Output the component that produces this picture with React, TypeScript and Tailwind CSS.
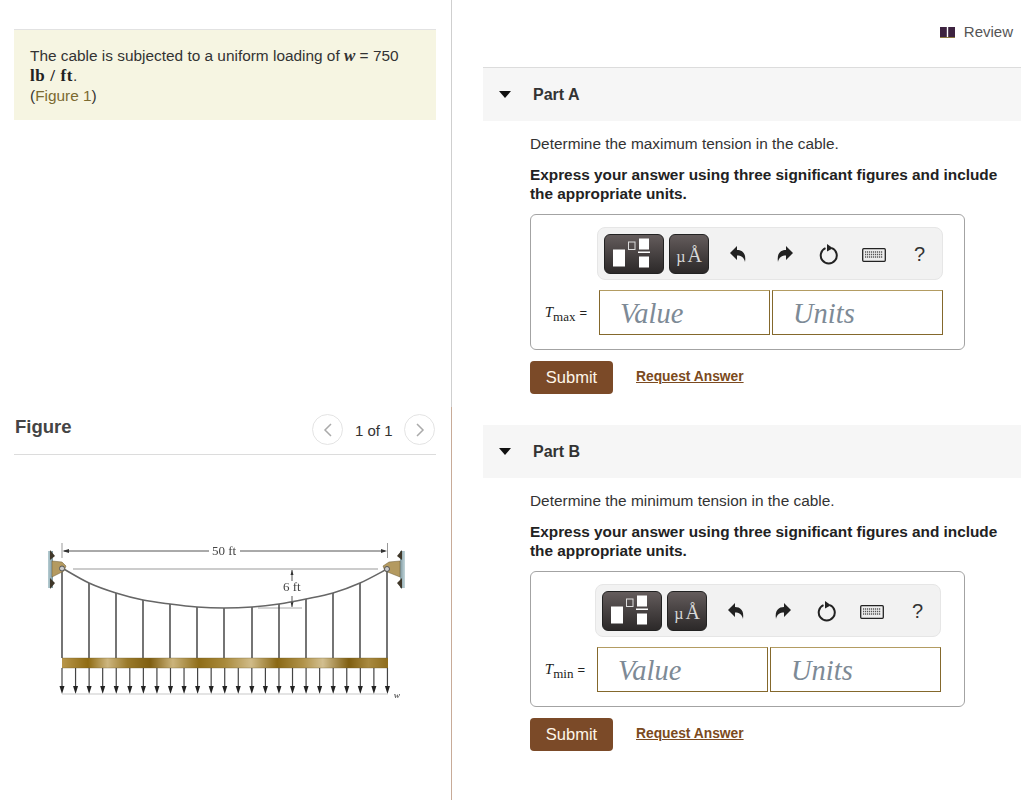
import React from "react";

const hangers: [number, number][] = [
  [62, 568], [89, 583], [116, 593], [143, 600], [170, 604], [197, 607], [224, 608],
  [252, 607], [279, 604], [306, 599], [333, 593], [360, 583], [387, 569],
];
const arrows = Array.from({ length: 25 }, (_, i) => 62 + i * 13.56);
const serif = "'Liberation Serif', serif";

function cablePath() {
  let d = `M${hangers[0][0]} ${hangers[0][1]}`;
  for (let i = 0; i < hangers.length - 1; i++) {
    const p0 = hangers[Math.max(i - 1, 0)];
    const p1 = hangers[i];
    const p2 = hangers[i + 1];
    const p3 = hangers[Math.min(i + 2, hangers.length - 1)];
    d += `C${p1[0] + (p2[0] - p0[0]) / 6} ${p1[1] + (p2[1] - p0[1]) / 6} ${p2[0] - (p3[0] - p1[0]) / 6} ${p2[1] - (p3[1] - p1[1]) / 6} ${p2[0]} ${p2[1]}`;
  }
  return d;
}

function Figure() {
  return (
    <svg width="390" height="180" viewBox="30 530 390 180" className="block blur-[0.35px]">
      <defs>
        <linearGradient id="deck" x1="62" x2="388" y1="0" y2="0" gradientUnits="userSpaceOnUse">
          {[
            ["0", "#b9974c"], ["0.08", "#8f6b12"], ["0.14", "#cdb67f"], ["0.2", "#9a7a2a"], ["0.27", "#7f5e10"],
            ["0.34", "#cbb47c"], ["0.42", "#8f6d18"], ["0.5", "#a98a3c"], ["0.58", "#d0bb88"], ["0.66", "#8a6814"],
            ["0.74", "#b1934a"], ["0.8", "#d2bf90"], ["0.88", "#7f5e10"], ["0.94", "#a98a40"], ["1", "#8e6c1c"],
          ].map(([o, c]) => (
            <stop key={o} offset={o} stopColor={c} />
          ))}
        </linearGradient>
        <linearGradient id="wallL" x1="0" x2="1" y1="0" y2="0">
          <stop offset="0" stopColor="#b5ccd2" />
          <stop offset="1" stopColor="#7d98a0" />
        </linearGradient>
        <linearGradient id="wallR" x1="0" x2="1" y1="0" y2="0">
          <stop offset="0" stopColor="#7d98a0" />
          <stop offset="1" stopColor="#c3d6da" />
        </linearGradient>
      </defs>
      <path d="M62 543V558M387.500 543V558" stroke="#999" strokeWidth="1" />
      <path d="M64 551H209M240 551H385" stroke="#555" strokeWidth="1" />
      <path d="M62.500 551L69 549V553ZM387 551L381 549V553Z" fill="#333" />
      <text x="212" y="555" fontSize="13" fontFamily={serif} fill="#444">50 ft</text>
      <path d="M73 569H378" stroke="#999" strokeWidth="1" />
      <path d="M292 570V581M292 596V607" stroke="#555" strokeWidth="1" />
      <path d="M292 570L290.500 575H293.500ZM292 607L290.500 602H293.500Z" fill="#333" />
      <text x="283" y="591" fontSize="13" fontFamily={serif} fill="#444">6 ft</text>
      <path d="M258 608H302" stroke="#aaa" strokeWidth="1" />
      {hangers.map(([x, y]) => (
        <path key={x} d={`M${x} ${y}V658`} stroke="#3a3a3a" strokeWidth="1.400" />
      ))}
      <path d={cablePath()} fill="none" stroke="#666" strokeWidth="1.500" />
      <rect x="62" y="658" width="326" height="10" fill="url(#deck)" />
      <path d="M62 658H388M62 668H388" stroke="#6e5a2a" strokeWidth="0.600" opacity="0.6" />
      {arrows.map((x) => (
        <g key={x}>
          <path d={`M${x} 668V688`} stroke="#444" strokeWidth="1.200" />
          <path d={`M${x - 2.500} 686H${x + 2.500}L${x} 694Z`} fill="#222" />
        </g>
      ))}
      <path d="M62 694H388" stroke="#bbb" strokeWidth="0.800" />
      <text x="394" y="698" fontSize="9" fontStyle="italic" fontWeight="700" fontFamily={serif} fill="#666">w</text>
      <rect x="48" y="551" width="5" height="37" fill="url(#wallL)" />
      <path d="M50 550L55 556L50 560ZM50 589L55 583L50 578Z" fill="#40382a" />
      <path d="M52 561L62 562L66 566L64 571L52 577Z" fill="#b49a60" stroke="#6a5a34" strokeWidth="0.500" />
      <circle cx="62" cy="568.500" r="2.500" fill="#ccc" stroke="#555" strokeWidth="1" />
      <rect x="400" y="551" width="5" height="37" fill="url(#wallR)" />
      <path d="M402 550L397 556L402 560ZM402 589L397 583L402 578Z" fill="#40382a" />
      <path d="M400 561L389 562L383 566L385 571L400 577Z" fill="#b49a60" stroke="#6a5a34" strokeWidth="0.500" />
      <circle cx="387" cy="569" r="2.500" fill="#ccc" stroke="#555" strokeWidth="1" />
    </svg>
  );
}

function Toolbar() {
  return (
    <div className="h-[53px] w-[346px] rounded-lg bg-[#f2f2f2] border border-[#e6e6e6] flex items-center pl-[6px]">
      <div className="w-[60px] h-[40px] rounded-md bg-gradient-to-b from-[#645c5c] to-[#2c2929] border border-[#222] flex items-center justify-center">
        <svg width="46" height="34" viewBox="0 0 46 34">
          <rect x="2" y="12.500" width="12" height="17" fill="#fff" />
          <rect x="17.500" y="5" width="6.500" height="7.500" fill="none" stroke="#ddd" strokeWidth="1" />
          <rect x="28" y="1.500" width="10" height="11" fill="#fff" />
          <rect x="27" y="14.500" width="12" height="1.500" fill="#fff" />
          <rect x="28" y="19.500" width="10" height="11" fill="#fff" />
        </svg>
      </div>
      <div className="ml-[5px] w-[40px] h-[40px] rounded-md bg-gradient-to-b from-[#645c5c] to-[#2c2929] border border-[#222] flex items-end justify-center pb-[8px] text-[#d8d8d8] font-['Liberation_Serif',serif] leading-none">
        <span className="text-[16px] mr-[2px]">µ</span>
        <span className="text-[20px]">Å</span>
      </div>
      <svg width="18" height="18" viewBox="0 0 18 18" className="ml-[21px]">
        <path d="M0 8L7 1V5C12 5 16.500 8 15 17C14 12 11 10.500 7 10.500V15Z" fill="#222" />
      </svg>
      <svg width="18" height="18" viewBox="0 0 18 18" className="ml-[27px]">
        <path d="M18 8L11 1V5C6 5 1.500 8 3 17C4 12 7 10.500 11 10.500V15Z" fill="#222" />
      </svg>
      <svg width="20" height="22" viewBox="0 0 20 22" className="ml-[26px]">
        <path d="M13 5.200A8 8 0 1 1 6.500 5.200" fill="none" stroke="#222" strokeWidth="2" />
        <path d="M8 1L14 5.300L8 8.500Z" fill="#222" />
      </svg>
      <svg width="24" height="14" viewBox="0 0 24 14" className="ml-[23px] mt-[3px]">
        <rect x="0.700" y="0.700" width="22.600" height="12.600" rx="1" fill="#eee" stroke="#222" strokeWidth="1.300" />
        <path d="M3 4H21M3 6.500H21M3 9H21" stroke="#555" strokeWidth="1.300" strokeDasharray="1.200 0.800" />
      </svg>
      <span className="ml-[28px] text-[20px] leading-none text-[#333]">?</span>
    </div>
  );
}

function Field({ label }: { label: string }) {
  return (
    <div className="w-[171px] h-[45px] border border-[#84682c] border-t-[#b39c62] flex items-center pl-[20px] pt-[3px] font-['Liberation_Serif',serif] italic text-[28.500px] text-[#7d8a96]">
      {label}
    </div>
  );
}

function Part({
  name,
  question,
  sub,
  toolbarInset,
  rowInset,
}: {
  name: string;
  question: string;
  sub: string;
  toolbarInset: string;
  rowInset: string;
}) {
  return (
    <section>
      <div className="h-[53px] bg-[#f6f6f6] flex items-center pl-[16px]">
        <svg width="12" height="7" viewBox="0 0 12 7">
          <path d="M0 0H12L6 7Z" fill="#111" />
        </svg>
        <span className="ml-[22px] text-[16px] font-bold text-[#333]">{name}</span>
      </div>
      <div className="pl-[47px]">
        <p className="mt-[13px] text-[15.400px] leading-[19px] text-[#333]">{question}</p>
        <p className="mt-[12px] text-[15.350px] leading-[19px] font-bold text-[#222]">
          Express your answer using three significant figures and include
          <br />
          the appropriate units.
        </p>
        <div className="mt-[11px] w-[435px] h-[136px] border border-[#a3a3a3] rounded-md">
          <div className={`pt-[12px] ${toolbarInset}`}>
            <Toolbar />
          </div>
          <div className={`mt-[10px] flex items-center ${rowInset}`}>
            <div className="w-[55px] -ml-[55px] pr-[12px] flex items-baseline justify-end text-[#222] font-['Liberation_Serif',serif]">
              <i className="text-[15px]">T</i>
              <span className="text-[13px] relative top-[4px]">{sub}</span>
              <span className="text-[13px] ml-[4px] font-['Liberation_Sans',sans-serif]">=</span>
            </div>
            <Field label="Value" />
            <div className="w-[2px]" />
            <Field label="Units" />
          </div>
        </div>
        <div className="mt-[11px] flex items-center">
          <div className="w-[83px] h-[33px] rounded-sm bg-[#7b4a28] text-[#fff6e8] text-[16.500px] flex items-center justify-center">
            Submit
          </div>
          <span className="ml-[23px] text-[13.800px] font-bold text-[#7b4a20] underline">Request Answer</span>
        </div>
      </div>
    </section>
  );
}

function Nav({ dir }: { dir: "l" | "r" }) {
  return (
    <div className="w-[31px] h-[31px] rounded-full border border-[#e4e4e4] flex items-center justify-center">
      <svg width="10" height="14" viewBox="0 0 10 14">
        <path d={dir === "l" ? "M8 1L2 7L8 13" : "M2 1L8 7L2 13"} fill="none" stroke="#aaa" strokeWidth="1.500" />
      </svg>
    </div>
  );
}

export default function App() {
  return (
    <div className="w-[1024px] h-[800px] flex bg-white overflow-hidden font-['Liberation_Sans',sans-serif]">
      <div className="w-[452px] shrink-0 flex flex-col">
        <div className="h-[407px] border-r border-[#cfcfcf] pt-[29px] pl-[14px] pr-[15px]">
          <div className="h-[91px] border-t border-[#e2e2e2] bg-[#f6f5e2] pl-[16px] pt-[16px] text-[15.400px] leading-[20px] text-[#333]">
            <div>
              The cable is subjected to a uniform loading of{" "}
              <i className="font-['Liberation_Serif',serif] font-bold text-[17px]">w</i> = 750
            </div>
            <div>
              <span className="font-['Liberation_Serif',serif] font-bold text-[17px] text-[#222] tracking-[0.6px]">lb / ft</span>.
            </div>
            <div>
              (<span className="text-[#7b6a30]">Figure 1</span>)
            </div>
          </div>
        </div>
        <div className="flex-1 border-r border-[#c8ab98] pl-[14px] pr-[15px]">
          <div className="h-[48px] border-b border-[#dcdcdc] flex items-center">
            <span className="pl-[1px] text-[18.500px] font-bold text-[#444] -mt-[7px]">Figure</span>
            <div className="ml-auto pr-[1px] flex items-center -mt-[2px]">
              <Nav dir="l" />
              <span className="mx-[11.500px] mt-[4px] text-[15px] text-[#333]">1 of 1</span>
              <Nav dir="r" />
            </div>
          </div>
          <div className="pl-[16px] pt-[75px]">
            <Figure />
          </div>
        </div>
      </div>
      <div className="flex-1 pl-[31px] pr-[3px]">
        <div className="h-[68px] pt-[23px] border-b border-[#dcdcdc] flex items-start justify-end pr-[8px]">
          <svg width="15" height="12" viewBox="0 0 15 12" className="mt-[3px] mr-[9px]">
            <path d="M0 1H6.800V11H0ZM8.200 1H15V11H8.200Z" fill="#3d2340" />
            <path d="M0 11.500H15" stroke="#8c7a40" strokeWidth="1" />
          </svg>
          <span className="text-[15px] leading-[18px] text-[#555]">Review</span>
        </div>
        <Part
          name="Part A"
          question="Determine the maximum tension in the cable."
          sub="max"
          toolbarInset="pl-[66px]"
          rowInset="pl-[68px]"
        />
        <div className="h-[31px]" />
        <Part
          name="Part B"
          question="Determine the minimum tension in the cable."
          sub="min"
          toolbarInset="pl-[64px]"
          rowInset="pl-[66px]"
        />
      </div>
    </div>
  );
}
